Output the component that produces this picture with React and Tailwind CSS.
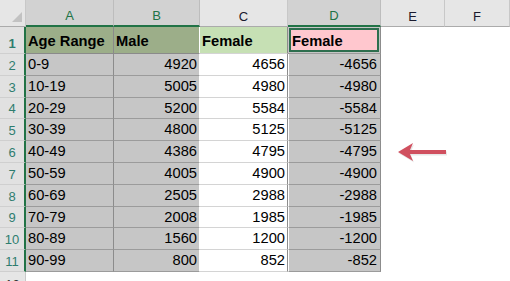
import React from 'react';

const rows = [
  ['0-9', 4920, 4656],
  ['10-19', 5005, 4980],
  ['20-29', 5200, 5584],
  ['30-39', 4800, 5125],
  ['40-49', 4386, 4795],
  ['50-59', 4005, 4900],
  ['60-69', 2505, 2988],
  ['70-79', 2008, 1985],
  ['80-89', 1560, 1200],
  ['90-99', 800, 852],
];

const colHeaders = [
  { label: 'A', w: 'w-[88px]', selected: true },
  { label: 'B', w: 'w-[86px]', selected: true },
  { label: 'C', w: 'w-[88px]', selected: false },
  { label: 'D', w: 'w-[93px]', selected: true },
  { label: 'E', w: 'w-[64px]', selected: false },
  { label: 'F', w: 'flex-1', selected: false },
];

function RowHeader({ n, tall }) {
  return (
    <div
      className={`box-border w-[26px] shrink-0 bg-[#e1e1e1] border-r-2 border-r-[#217346] border-b border-b-[#cfcfcf] flex items-end justify-center pb-[3px] text-[13px] leading-none text-[#2e7d6f] ${tall ? 'h-[27px]' : 'h-[21.8px]'}`}
    >
      {n}
    </div>
  );
}

export default function App() {
  return (
    <div className="relative w-[510px] h-[281px] overflow-hidden bg-white font-['Liberation_Sans',Arial,sans-serif] text-black">
      {/* column headers */}
      <div className="flex h-[27px]">
        <div className="box-border w-[26px] shrink-0 bg-[#e6e6e6] border-r border-r-[#c8c8c8] border-b border-b-[#ababab] relative">
          <div className="absolute right-[3px] bottom-[4px] w-0 h-0 border-l-[10px] border-l-transparent border-b-[10px] border-b-[#c2c2c2]" />
        </div>
        {colHeaders.map((c) => (
          <div
            key={c.label}
            className={`box-border ${c.w} shrink-0 flex items-center justify-center pt-[7px] text-[13px] border-r ${
              c.selected
                ? 'bg-[#d2d2d2] text-[#217346] border-r-[#bdbdbd] border-b-2 border-b-[#217346]'
                : 'bg-[#e6e6e6] text-[#1a1a2e] border-r-[#c8c8c8] border-b border-b-[#ababab]'
            }`}
          >
            {c.label}
          </div>
        ))}
      </div>

      {/* row 1: headings */}
      <div className="flex h-[27px] text-[14.7px] font-bold leading-none">
        <RowHeader n={1} tall />
        <div className="box-border w-[88px] shrink-0 bg-[#9cae89] border-r border-r-[#8a8a8a] border-b border-b-[#8a8a8a] flex items-end pl-[2px] pb-[4px]">
          Age Range
        </div>
        <div className="box-border w-[86px] shrink-0 bg-[#9cae89] border-r border-r-white border-b border-b-[#8a8a8a] flex items-end pl-[2px] pb-[4px]">
          Male
        </div>
        <div className="box-border w-[88px] shrink-0 bg-[#c6e0b4] border-r border-r-[#8c8c8c] border-b border-b-[#d4d4d4] flex items-end pl-[2px] pb-[4px]">
          Female
        </div>
        <div className="box-border w-[93px] shrink-0 bg-[#c6c6c6] border-r border-r-[#8c8c8c] border-b border-b-[#9b9b9b] p-[1px]">
          <div className="box-border h-full bg-[#ffc7ce] border-2 border-[#2d6e4e] flex items-end pl-[1px] pb-[1px]">
            Female
          </div>
        </div>
        <div className="flex-1" />
      </div>

      {/* data rows */}
      {rows.map(([range, male, female], i) => (
        <div key={range} className="flex h-[21.8px] text-[14.7px] leading-none">
          <RowHeader n={i + 2} />
          <div className="box-border w-[88px] shrink-0 bg-[#c6c6c6] border-r border-r-[#8c8c8c] border-b border-b-[#9b9b9b] flex items-end pl-[2px] pb-[3px]">
            {range}
          </div>
          <div className="box-border w-[86px] shrink-0 bg-[#c6c6c6] border-r border-r-white border-b border-b-[#9b9b9b] flex items-end justify-end pr-[2px] pb-[3px]">
            {male}
          </div>
          <div className="box-border w-[88px] shrink-0 bg-white border-r border-r-[#8c8c8c] border-b border-b-[#d4d4d4] flex items-end justify-end pr-[2px] pb-[3px]">
            {female}
          </div>
          <div className="box-border w-[93px] shrink-0 bg-[#c6c6c6] border-l border-l-white border-r border-r-[#8c8c8c] border-b border-b-[#9b9b9b] flex items-end justify-end pr-[3px] pb-[3px]">
            {-female}
          </div>
          <div className="flex-1" />
        </div>
      ))}

      {/* row 12, cut off */}
      <div className="flex h-[20px]">
        <div className="box-border w-[26px] shrink-0 bg-[#e6e6e6] border-r border-r-[#c8c8c8] flex justify-center pt-[3px] text-[13px] text-[#333]">
          12
        </div>
        <div className="flex-1 border-t border-t-white" />
      </div>

      {/* arrow pointer */}
      <svg className="absolute left-[396px] top-[140px]" width="52" height="24" viewBox="0 0 52 24">
        <path d="M2 12 L17 3 L14 10 L50 10 L50 14 L14 14 L17 21 Z" fill="#b9b9b9" opacity="0.35" transform="translate(1 1.5)" />
        <path d="M2 12 L17 3 L14 10 L50 10 L50 14 L14 14 L17 21 Z" fill="#d0505f" />
      </svg>
    </div>
  );
}
